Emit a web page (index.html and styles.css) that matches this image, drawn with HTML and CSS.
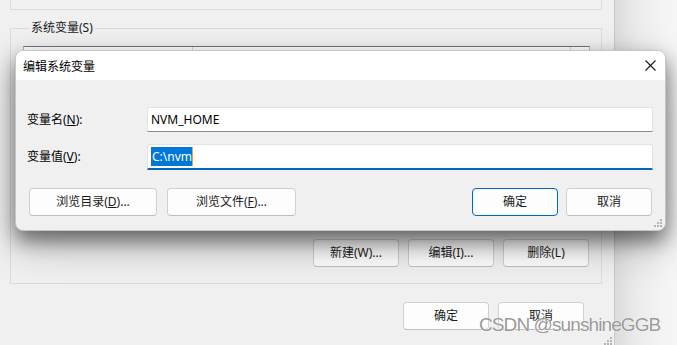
FILE: index.html
```html
<!DOCTYPE html>
<html lang="zh-CN">
<head>
<meta charset="utf-8">
<title>编辑系统变量</title>
<link rel="stylesheet" href="styles.css">
</head>
<body>
<div class="bgwin">
  <div class="grp-top"></div>
  <fieldset class="grp-sys">
    <legend>系统变量(S)</legend>
    <div class="listbox">
      <div class="list-head"><span class="col c1"></span><span class="col c2"></span><span class="col c3"></span></div>
    </div>
    <div class="btn-row bg-btns">
      <button class="btn">新建(W)...</button>
      <button class="btn">编辑(I)...</button>
      <button class="btn">删除(L)</button>
    </div>
  </fieldset>
  <div class="btn-row bottom-btns">
    <button class="btn">确定</button>
    <button class="btn">取消</button>
  </div>
  <svg class="grip grip-bg" width="8" height="8" viewBox="0 0 8 8"><g fill="#b4b4b4"><rect x="6" y="0" width="2" height="2"/><rect x="3" y="3" width="2" height="2"/><rect x="6" y="3" width="2" height="2"/><rect x="0" y="6" width="2" height="2"/><rect x="3" y="6" width="2" height="2"/><rect x="6" y="6" width="2" height="2"/></g></svg>
</div>
<div class="desk"></div>

<div class="dlg">
  <div class="dlg-title">
    <span>编辑系统变量</span>
    <svg class="close" width="11" height="11" viewBox="0 0 11 11"><path d="M0.5 0.5 L10.5 10.5 M10.5 0.5 L0.5 10.5" stroke="#1a1a1a" stroke-width="1.1" fill="none"/></svg>
  </div>
  <div class="dlg-body">
    <div class="field">
      <label>变量名(<u>N</u>):</label>
      <div class="input">NVM_HOME</div>
    </div>
    <div class="field">
      <label>变量值(<u>V</u>):</label>
      <div class="input focus"><span class="sel">C:\nvm</span></div>
    </div>
    <div class="dlg-btns">
      <div class="grp-left">
        <button class="btn w1">浏览目录(<u>D</u>)...</button>
        <button class="btn w2">浏览文件(<u>F</u>)...</button>
      </div>
      <div class="grp-right">
        <button class="btn primary">确定</button>
        <button class="btn">取消</button>
      </div>
    </div>
  </div>
  <svg class="grip grip-dlg" width="8" height="8" viewBox="0 0 8 8"><g fill="#b4b4b4"><rect x="6" y="0" width="2" height="2"/><rect x="3" y="3" width="2" height="2"/><rect x="6" y="3" width="2" height="2"/><rect x="0" y="6" width="2" height="2"/><rect x="3" y="6" width="2" height="2"/><rect x="6" y="6" width="2" height="2"/></g></svg>
</div>

<div class="watermark">CSDN @sunshineGGB</div>
</body>
</html>
```

FILE: styles.css
```css
* { box-sizing: border-box; }

html, body {
  margin: 0;
  width: 677px;
  height: 345px;
  overflow: hidden;
}

body {
  display: flex;
  font-family: "Noto Sans", "Noto Sans CJK SC", sans-serif;
  font-size: 12px;
  color: #000;
  background: #f0f0f0;
  position: relative;
}

.bgwin {
  width: 615px;
  height: 345px;
  background: #f0f0f0;
  border-right: 1px solid #c8c8c8;
  padding-left: 10px;
  position: relative;
  flex: none;
}

.desk {
  flex: 1;
  background: linear-gradient(to right, #dcdcdc, #ebebeb 35%, #f4f4f4 80%, #f6f6f6);
}

.grp-top {
  width: 592px;
  height: 10px;
  border: 1px solid #dcdcdc;
  border-top: none;
}

.grp-sys {
  width: 592px;
  height: 264px;
  margin: 10px 0 0 0;
  padding: 0 12px 16px 12px;
  border: 1px solid #dcdcdc;
  min-inline-size: 0;
}

.grp-sys legend {
  margin-left: 6px;
  padding: 0 2px;
  line-height: 16px;
  font-size: 12px;
  color: #1a1a1a;
}

.listbox {
  margin-top: 10px;
  width: 567px;
  height: 182px;
  background: #fff;
  border: 1px solid #b9b9b9;
  border-top: 1px solid #6f7785;
}

.list-head {
  display: flex;
  height: 22px;
  border-bottom: 1px solid #e5e5e5;
}

.col { border-right: 1px solid #d8d8d8; height: 100%; }
.c1 { width: 169px; }
.c2 { width: 378px; }
.c3 { flex: 1; border-right: none; }

.btn-row {
  display: flex;
  justify-content: flex-end;
  gap: 9px;
}

.bg-btns { margin-top: 11px; }

.bottom-btns {
  margin-top: 18px;
  padding-right: 30px;
}

.btn {
  width: 86px;
  height: 28px;
  padding: 0;
  font-family: "Noto Sans", "Noto Sans CJK SC", sans-serif;
  font-size: 12px;
  color: #1a1a1a;
  background: #fdfdfd;
  border: 1px solid #d0d0d0;
  border-bottom-color: #bdbdbd;
  border-radius: 4px;
  line-height: 26px;
}

.grip { position: absolute; }
.grip-bg { right: 2px; bottom: 0; }
.grip-dlg { right: 3px; bottom: 3px; }

.dlg {
  position: absolute;
  left: 15px;
  top: 50px;
  width: 651px;
  height: 181px;
  background: #f0f0f0;
  border: 1px solid #c6c6c6;
  border-radius: 8px;
  overflow: hidden;
  box-shadow: 0 10px 20px rgba(0, 0, 0, 0.5), 0 16px 44px rgba(0, 0, 0, 0.2);
}

.dlg-title {
  height: 29px;
  background: #fff;
  display: flex;
  align-items: center;
  justify-content: space-between;
  padding: 0 9px 0 7px;
  font-size: 12px;
}

.close { display: block; }

.dlg-body {
  padding: 27px 12px 0 11px;
}

.field {
  display: grid;
  grid-template-columns: 120px 1fr;
  align-items: center;
  margin-bottom: 12px;
}

.field label { font-size: 12px; margin-top: -2px; }

.input {
  height: 25px;
  background: #fff;
  border: 1px solid #e3e3e3;
  border-bottom: 1px solid #8a8a8a;
  border-radius: 3px 3px 0 0;
  padding-left: 3px;
  font-size: 12px;
  line-height: 23px;
  font-family: "Noto Sans", sans-serif;
}

.input.focus {
  height: 26px;
  border-bottom: 2px solid #0067c0;
  line-height: 23px;
}

.sel {
  background: #0078d7;
  color: #fff;
  padding: 1px 0 1px 1px;
  border-right: 1px solid #ff9a2e;
}

.dlg-btns {
  display: flex;
  justify-content: space-between;
  margin-top: 18px;
  padding: 0 1px 0 2px;
}

.grp-left { display: flex; gap: 10px; }
.grp-right { display: flex; gap: 8px; }

.btn.w1 { width: 128px; }
.btn.w2 { width: 129px; }

.btn.primary {
  border: 1px solid #0067c0;
}

.watermark {
  position: absolute;
  left: 479px;
  top: 314px;
  font-family: "Liberation Sans", sans-serif;
  font-size: 19px;
  letter-spacing: -0.9px;
  color: rgba(125, 125, 125, 0.8);
  text-shadow: 0 0 1px #fff, 0 0 1px #fff;
  white-space: nowrap;
}
```
